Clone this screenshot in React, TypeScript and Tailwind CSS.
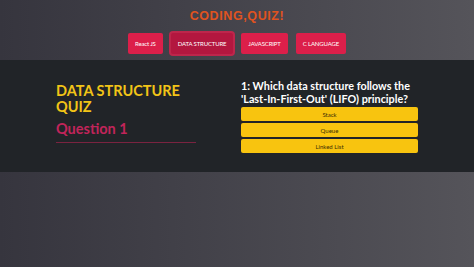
import React, { useState } from 'react';

const topics = ['React JS', 'DATA STRUCTURE', 'JAVASCRIPT', 'C LANGUAGE'];
const options = ['Stack', 'Queue', 'Linked List'];

const App: React.FC = () => {
  const [active, setActive] = useState('DATA STRUCTURE');

  return (
    <div
      className="min-h-screen w-full bg-gradient-to-r from-[#36353e] to-[#55545a]"
      style={{ fontFamily: 'Lato, "Noto Sans", sans-serif' }}
    >
      {/* Header */}
      <div className="flex flex-col items-center pt-[8px]">
        <h1
          className="text-[12.5px] font-bold tracking-[0.6px] text-[#e0531f] leading-[16px]"
          style={{ fontFamily: '"Liberation Sans", Arial, sans-serif' }}
        >
          CODING,QUIZ!
        </h1>
        <div className="mt-[9px] flex gap-[8px]">
          {topics.map((t) => (
            <button
              key={t}
              onClick={() => setActive(t)}
              className={`h-[21px] rounded-[2px] px-[7px] text-[6px] tracking-[-0.15px] text-white ${
                active === t
                  ? 'bg-[#b3173f] ring-[2px] ring-[#dc1f4c]/80'
                  : 'bg-[#dc1f4a]'
              }`}
            >
              {t}
            </button>
          ))}
        </div>
      </div>

      {/* Quiz panel */}
      <div className="mt-[6px] h-[112px] bg-[#212428] flex pl-[56px] pt-[23px]">
        <div className="w-[140px]">
          <h2 className="text-[14.5px] font-bold leading-[16px] text-[#f2c417]">
            DATA STRUCTURE
            <br />
            QUIZ
          </h2>
          <h3 className="mt-[4px] text-[14.5px] font-bold leading-[20px] text-[#c1245a]">
            Question 1
          </h3>
          <div className="mt-[3px] h-px bg-[#7a2340]" />
        </div>
        <div className="-mt-[3px] ml-[45px] w-[177px]">
          <p className="text-[10.8px] font-bold leading-[12.5px] text-white">
            1: Which data structure follows the 'Last-In-First-Out' (LIFO) principle?
          </p>
          <div className="mt-[2px] flex flex-col gap-[2px]">
            {options.map((o) => (
              <button
                key={o}
                className="h-[14px] w-full rounded-[2px] bg-[#f8c40f] text-[6px] text-[#3a2c05]"
              >
                {o}
              </button>
            ))}
          </div>
        </div>
      </div>
    </div>
  );
};

export default App;
